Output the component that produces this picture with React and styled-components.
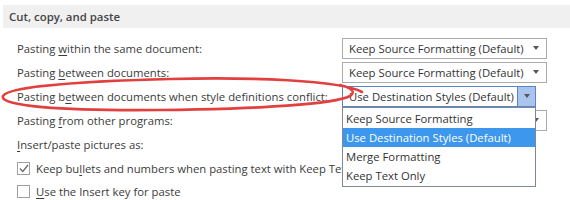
import styled, { createGlobalStyle } from "styled-components";

const Global = createGlobalStyle`
  html, body {
    margin: 0;
    padding: 0;
    background: #ffffff;
  }
  body {
    font-family: "Open Sans", "Liberation Sans", sans-serif;
    font-size: 11.3px;
    color: #3b3b3b;
  }
`;

const Page = styled.div`
  position: relative;
  width: 570px;
  height: 200px;
  overflow: hidden;
  background: #fff;
  padding-top: 5px;
  box-sizing: border-box;
`;

const SectionHead = styled.div`
  margin-left: 3px;
  height: 23px;
  background: #f0f0f0;
  display: flex;
  align-items: center;
  padding-left: 6px;
  font-weight: 600;
  font-size: 11.4px;
  color: #444;
`;

const Options = styled.div`
  margin-top: 8px;
  padding-left: 17px;
  display: flex;
  flex-direction: column;
`;

const Row = styled.div`
  height: ${(p) => p.$h || 24}px;
  display: grid;
  grid-template-columns: 325px auto;
  align-items: center;
  white-space: nowrap;
`;

const CheckRow = styled.div`
  height: ${(p) => p.$h || 24}px;
  display: flex;
  align-items: center;
  gap: 6px;
  white-space: nowrap;
`;

const Key = styled.span`
  text-decoration: underline;
  text-underline-offset: 2px;
`;

const Combo = styled.div`
  position: relative;
  width: ${(p) => p.$w || 205}px;
  height: 21px;
  box-sizing: border-box;
  border: 1px solid ${(p) => (p.$open ? "#5a86c6" : "#ababab")};
  background: #fff;
  display: flex;
  align-items: center;
  justify-content: space-between;
  padding-left: 6px;
  color: #333;
`;

const Arrow = styled.div`
  width: 17px;
  height: 100%;
  display: flex;
  align-items: center;
  justify-content: center;
  background: ${(p) => (p.$open ? "#a9c5ee" : "transparent")};
  border-left: 1px solid ${(p) => (p.$open ? "#5a86c6" : "transparent")};
  margin-right: ${(p) => (p.$open ? 0 : 2)}px;
  &::after {
    content: "";
    border-left: 3.5px solid transparent;
    border-right: 3.5px solid transparent;
    border-top: 4px solid #555;
  }
`;

const Popup = styled.ul`
  position: absolute;
  left: -1px;
  top: 20px;
  width: 194px;
  margin: 0;
  padding: 1px 0;
  list-style: none;
  box-sizing: border-box;
  background: #fff;
  border: 1px solid #7d8795;
  z-index: 2;
`;

const Item = styled.li`
  height: 19px;
  display: flex;
  align-items: center;
  padding-left: 3px;
  background: ${(p) => (p.$active ? "#3d97ec" : "transparent")};
  color: ${(p) => (p.$active ? "#fff" : "#333")};
`;

const Box = styled.span`
  width: 13px;
  height: 13px;
  box-sizing: border-box;
  border: 1px solid #a0a0a0;
  display: flex;
  align-items: center;
  justify-content: center;
  background: #fff;
`;

const Circle = styled.svg`
  position: absolute;
  left: 0;
  top: 0;
  pointer-events: none;
  z-index: 3;
`;

export default function App() {
  return (
    <Page>
      <Global />
      <SectionHead>Cut, copy, and paste</SectionHead>
      <Options>
        <Row>
          <span>
            Pasting <Key>w</Key>ithin the same document:
          </span>
          <Combo>
            Keep Source Formatting (Default)
            <Arrow />
          </Combo>
        </Row>
        <Row>
          <span>
            Pasting <Key>b</Key>etween documents:
          </span>
          <Combo>
            Keep Source Formatting (Default)
            <Arrow />
          </Combo>
        </Row>
        <Row>
          <span>
            Pasting b<Key>e</Key>tween documents when style definitions conflict:
          </span>
          <Combo $w={194} $open>
            Use Destination Styles (Default)
            <Arrow $open />
            <Popup>
              <Item>Keep Source Formatting</Item>
              <Item $active>Use Destination Styles (Default)</Item>
              <Item>Merge Formatting</Item>
              <Item>Keep Text Only</Item>
            </Popup>
          </Combo>
        </Row>
        <Row>
          <span>
            Pasting <Key>f</Key>rom other programs:
          </span>
          <Combo>
            Keep Source Formatting (Default)
            <Arrow />
          </Combo>
        </Row>
        <Row>
          <span>
            <Key>I</Key>nsert/paste pictures as:
          </span>
        </Row>
        <CheckRow>
          <Box>
            <svg width="10" height="9" viewBox="0 0 10 9">
              <path d="M1 4.5 L3.8 7.5 L9 1" fill="none" stroke="#6a6a6a" strokeWidth="1.3" />
            </svg>
          </Box>
          <span>
            Keep bu<Key>l</Key>lets and numbers when pasting text with Keep Text Only option
          </span>
        </CheckRow>
        <CheckRow $h={22}>
          <Box />
          <span>
            <Key>U</Key>se the Insert key for paste
          </span>
        </CheckRow>
      </Options>
      <Circle width="570" height="200" viewBox="0 0 570 200">
        <path
          d="M362 92 C 340 80, 250 77, 170 79 C 90 81, 8 86, 3 96 C -1 106, 60 111, 160 110 C 260 109, 335 104, 350 96 C 356 92, 352 88, 340 85"
          fill="none"
          stroke="#e2403e"
          strokeWidth="2.6"
          strokeLinecap="round"
        />
      </Circle>
    </Page>
  );
}
